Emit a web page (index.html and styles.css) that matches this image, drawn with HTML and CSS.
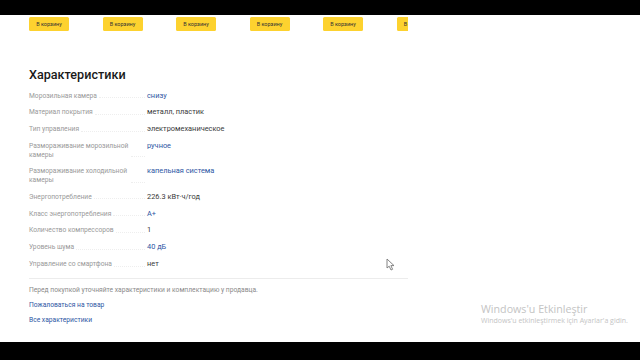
FILE: index.html
```html
<!DOCTYPE html>
<html lang="ru">
<head>
<meta charset="utf-8">
<title>Характеристики</title>
<link rel="stylesheet" href="styles.css">
</head>
<body>
<div class="screen">
  <div class="bar-top"></div>
  <main class="page">
    <div class="buttons">
      <span class="btn">В корзину</span>
      <span class="btn">В корзину</span>
      <span class="btn">В корзину</span>
      <span class="btn">В корзину</span>
      <span class="btn">В корзину</span>
      <span class="btn">В корзину</span>
    </div>
    <section class="specs">
      <h2 class="title">Характеристики</h2>
      <dl class="list">
        <div class="row"><dt class="label"><span class="name">Морозильная камера</span><span class="dots"></span></dt><dd class="value link">снизу</dd></div>
        <div class="row"><dt class="label"><span class="name">Материал покрытия</span><span class="dots"></span></dt><dd class="value">металл, пластик</dd></div>
        <div class="row"><dt class="label"><span class="name">Тип управления</span><span class="dots"></span></dt><dd class="value">электромеханическое</dd></div>
        <div class="row"><dt class="label"><span class="name">Размораживание морозильной камеры</span><span class="dots"></span></dt><dd class="value link">ручное</dd></div>
        <div class="row"><dt class="label"><span class="name">Размораживание холодильной камеры</span><span class="dots"></span></dt><dd class="value link">капельная система</dd></div>
        <div class="row"><dt class="label"><span class="name">Энергопотребление</span><span class="dots"></span></dt><dd class="value">226.3 кВт·ч/год</dd></div>
        <div class="row"><dt class="label"><span class="name">Класс энергопотребления</span><span class="dots"></span></dt><dd class="value link">A+</dd></div>
        <div class="row"><dt class="label"><span class="name">Количество компрессоров</span><span class="dots"></span></dt><dd class="value">1</dd></div>
        <div class="row"><dt class="label"><span class="name">Уровень шума</span><span class="dots"></span></dt><dd class="value link">40 дБ</dd></div>
        <div class="row"><dt class="label"><span class="name">Управление со смартфона</span><span class="dots"></span></dt><dd class="value">нет</dd></div>
      </dl>
      <div class="footer">
        <p class="note">Перед покупкой уточняйте характеристики и комплектацию у продавца.</p>
        <a class="flink" href="#">Пожаловаться на товар</a>
        <a class="flink" href="#">Все характеристики</a>
      </div>
    </section>
  </main>
  <div class="bar-bottom"></div>
  <div class="watermark">
    <div class="wm-title">Windows'u Etkinleştir</div>
    <div class="wm-sub">Windows'u etkinleştirmek için Ayarlar'a gidin.</div>
  </div>
  <svg class="cursor" width="10" height="14" viewBox="0 0 10 14">
    <path d="M1 1 L1 10 L3.2 8.2 L5 12 L6.6 11.3 L4.9 7.6 L8 7.6 Z" fill="#fff" stroke="#777" stroke-width="0.9" stroke-linejoin="round"/>
  </svg>
</div>
</body>
</html>
```
FILE: styles.css
```css
* { box-sizing: border-box; }
html, body { margin: 0; padding: 0; }
body {
  background: #000;
  font-family: Roboto, "Noto Sans", Arial, sans-serif;
  color: #222;
}
.screen {
  position: relative;
  width: 640px;
  height: 360px;
  display: flex;
  flex-direction: column;
  overflow: hidden;
}
.bar-top { height: 15px; background: #000; flex: none; }
.bar-bottom { height: 18px; background: #000; flex: none; }
.page {
  flex: 1;
  background: #fff;
  padding-left: 29px;
}
.buttons {
  display: flex;
  gap: 33.5px;
  width: 379px;
  overflow: hidden;
  padding-top: 2px;
}
.btn {
  flex: none;
  width: 40px;
  height: 14px;
  background: #fdd22f;
  border-radius: 1.5px;
  font-size: 5.5px;
  line-height: 14px;
  text-align: center;
  color: #333;
}
.specs { width: 379px; margin-top: 36px; }
.title {
  margin: 0 0 4.6px;
  font-size: 12.6px;
  line-height: 16px;
  font-weight: 500;
  color: #1a1a1a;
}
.list { margin: 0; }
.row {
  display: flex;
  align-items: baseline;
  padding: 4.1px 0;
}
.label {
  width: 118px;
  display: flex;
  align-items: flex-end;
  font-size: 6.7px;
  line-height: 8.6px;
  color: #999;
}
.name { max-width: 100px; }
.dots {
  flex: 1;
  min-width: 4px;
  margin: 0 2px 2px;
  border-bottom: 1px dotted #eeeeee;
}
.value {
  margin: 0;
  font-size: 7.4px;
  line-height: 8.6px;
  font-weight: 400;
  color: #3a3a3a;
}
.value.link { color: #2d56a3; }
.footer {
  margin-top: 5px;
  border-top: 1px solid #ececec;
  padding-top: 7.5px;
  display: flex;
  flex-direction: column;
  align-items: flex-start;
}
.note {
  margin: 0 0 5.5px;
  font-size: 6.7px;
  line-height: 9px;
  color: #8a8a8a;
}
.flink {
  font-size: 6.7px;
  line-height: 9px;
  color: #2d56a3;
  text-decoration: none;
  margin-bottom: 6px;
}
.watermark {
  position: absolute;
  left: 481px;
  top: 302px;
  font-family: "Open Sans", "Noto Sans", sans-serif;
  color: #c4c4c4;
}
.wm-title { font-size: 10.7px; line-height: 14px; }
.wm-sub { font-size: 7px; line-height: 10px; }
.cursor { position: absolute; left: 386px; top: 258px; }
```
